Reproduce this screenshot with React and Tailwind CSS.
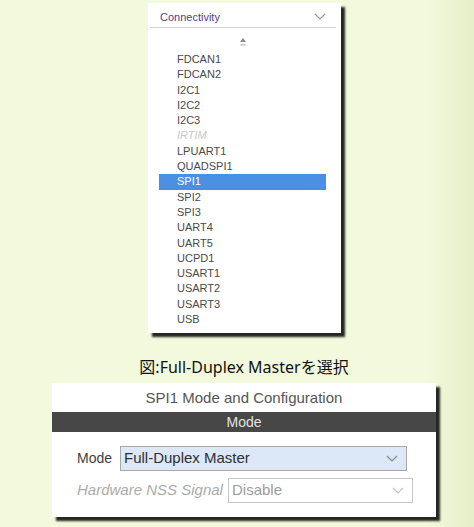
import React from 'react';

const peripherals = [
  'FDCAN1', 'FDCAN2', 'I2C1', 'I2C2', 'I2C3', 'IRTIM', 'LPUART1', 'QUADSPI1',
  'SPI1', 'SPI2', 'SPI3', 'UART4', 'UART5', 'UCPD1', 'USART1', 'USART2', 'USART3', 'USB',
];

const Chevron = ({ className }) => (
  <svg width="12" height="7" viewBox="0 0 12 7" className={className}>
    <path d="M1 1 L6 6 L11 1" fill="none" stroke="currentColor" strokeWidth="1.2" />
  </svg>
);

const PeripheralList = () => (
  <div className="ml-[148px] mt-[3px] w-[193px] h-[330px] bg-white shadow-[4px_4px_2px_rgba(0,0,0,0.85)]">
    <div className="mx-[2px] mr-[5px] h-[25px] flex items-center justify-between pl-[10px] pr-[10px] pt-[4px] border-b border-[#d6d6d6]">
      <span className="text-[11px] text-[#553d8a]">Connectivity</span>
      <Chevron className="text-[#9a9a9a] mb-[2px]" />
    </div>
    <div className="flex justify-center mt-[10px] pr-[4px]">
      <svg width="6" height="8" viewBox="0 0 6 8">
        <path d="M3 0 L6 4 L0 4 Z" fill="#8a8a8a" />
        <rect x="0.5" y="6" width="5" height="1.5" fill="#c4c4c4" />
      </svg>
    </div>
    <div className="mt-[6px] flex flex-col">
      {peripherals.map((name) => {
        const selected = name === 'SPI1';
        const disabled = name === 'IRTIM';
        return (
          <div
            key={name}
            className={
              'h-[15.3px] leading-[15.3px] text-[11px] ml-[11px] w-[167px] pl-[18px] ' +
              (selected ? 'bg-[#4a90e2] text-white' : disabled ? 'italic text-[#c8c8cc]' : 'text-[#4a4a4a]')
            }
          >
            {name}
          </div>
        );
      })}
    </div>
  </div>
);

const ModePanel = () => (
  <div className="ml-[52px] mt-[6px] w-[384px] h-[134px] bg-white shadow-[4px_4px_2px_rgba(0,0,0,0.85)]">
    <div className="h-[29px] pt-[1px] flex items-center justify-center text-[15px] text-[#555555]">
      SPI1 Mode and Configuration
    </div>
    <div className="h-[20px] bg-[#474747] flex items-center justify-center text-[14px] text-[#e2e2e2]">
      Mode
    </div>
    <div className="flex items-center mt-[14px] pl-[25px]">
      <span className="text-[14px] text-[#404040] w-[43px]">Mode</span>
      <div className="w-[287px] h-[25px] border border-[#a8a8a8] bg-[#dce7f7] flex items-center justify-between pl-[3px] pr-[8px]">
        <span className="text-[15px] text-[#303030]">Full-Duplex Master</span>
        <Chevron className="text-[#8a8a8a]" />
      </div>
    </div>
    <div className="flex items-center mt-[7px] pl-[25px]">
      <span className="text-[15px] italic text-[#ababab] w-[151px]">Hardware NSS Signal</span>
      <div className="w-[185px] h-[25px] border border-[#c6c6c6] bg-white flex items-center justify-between pl-[3px] pr-[8px]">
        <span className="text-[15px] text-[#9c9c9c]">Disable</span>
        <Chevron className="text-[#c2c2c2]" />
      </div>
    </div>
  </div>
);

export default function App() {
  return (
    <div
      className="w-[474px] h-[527px] overflow-hidden bg-linear-to-r from-[#f3f9dc] from-90% to-[#e6eec9] flex flex-col"
      style={{ fontFamily: '"Liberation Sans", Arial, "Noto Sans CJK JP", sans-serif' }}
    >
      <PeripheralList />
      <div
        className="mt-[23px] h-[21px] flex items-center justify-center text-[16px] text-[#111111] pl-[14px]"
        style={{ fontFamily: '"Noto Sans", "Noto Sans CJK JP", sans-serif' }}
      >
        図:Full-Duplex Masterを選択
      </div>
      <ModePanel />
    </div>
  );
}
